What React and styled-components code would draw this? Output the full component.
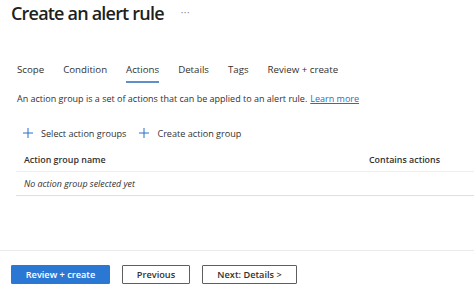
import React from "react";
import styled, { createGlobalStyle } from "styled-components";

const GlobalStyle = createGlobalStyle`
  html, body {
    margin: 0;
    padding: 0;
    background: #ffffff;
  }
  body {
    font-family: "Open Sans", "Noto Sans", Arial, sans-serif;
    color: #323130;
    width: 474px;
    height: 289px;
    overflow: hidden;
  }
`;

const Page = styled.div`
  display: flex;
  flex-direction: column;
  height: 289px;
`;

const Header = styled.div`
  display: flex;
  align-items: center;
  gap: 17px;
  padding: 0 0 0 11px;
  height: 26px;
`;

const Title = styled.h1`
  margin: 0;
  font-size: 18px;
  font-weight: 600;
  letter-spacing: -0.8px;
  color: #201f1e;
`;

const More = styled.span`
  font-size: 10px;
  color: #8a8886;
  letter-spacing: 0.5px;
  margin-top: -2px;
`;

const Tabs = styled.div`
  display: flex;
  gap: 19px;
  padding-left: 17px;
  margin-top: 34px;
  height: 22px;
`;

const Tab = styled.div`
  position: relative;
  font-size: 9.7px;
  line-height: 20px;
  color: #323130;
  &::after {
    content: "";
    position: absolute;
    left: 0;
    right: 0;
    bottom: -1px;
    height: 2px;
    background: ${(p) => (p.$active ? "#5f8fc8" : "transparent")};
  }
`;

const Description = styled.p`
  margin: 10px 0 0 17px;
  font-size: 9px;
  line-height: 14px;
  color: #323130;
`;

const Link = styled.a`
  color: #2a6ec2;
  text-decoration: underline;
  margin-left: 3px;
`;

const Toolbar = styled.div`
  display: flex;
  align-items: center;
  gap: 13px;
  padding-left: 23px;
  margin-top: 20px;
  height: 14px;
`;

const ToolButton = styled.div`
  display: flex;
  align-items: center;
  gap: 8px;
  font-size: 9.1px;
  color: #323130;
`;

const Table = styled.div`
  margin: 8px 0 0 16px;
`;

const Row = styled.div`
  display: grid;
  grid-template-columns: 345px 1fr;
  align-items: center;
  height: 23px;
  padding-left: 8px;
  border-bottom: 1px solid ${(p) => (p.$head ? "#f0efee" : "#e1dfdd")};
  font-size: 8.9px;
  font-weight: ${(p) => (p.$head ? 600 : 400)};
  font-style: ${(p) => (p.$italic ? "italic" : "normal")};
`;

const Spacer = styled.div`
  flex: 1;
`;

const Footer = styled.div`
  border-top: 1px solid #edebe9;
  display: flex;
  gap: 12px;
  padding: 14px 0 5px 11px;
`;

const Button = styled.button`
  height: 19px;
  width: ${(p) => p.$w}px;
  box-sizing: border-box;
  font-family: inherit;
  font-size: 9.2px;
  font-weight: 600;
  border-radius: 1px;
  padding: 0;
  border: 1px solid ${(p) => (p.$primary ? "#2b78d4" : "#605e5c")};
  background: ${(p) => (p.$primary ? "#2b78d4" : "#ffffff")};
  color: ${(p) => (p.$primary ? "#ffffff" : "#323130")};
`;

const Plus = () => (
  <svg width="10" height="10" viewBox="0 0 10 10">
    <path d="M5 0v10M0 5h10" stroke="#2b6fc7" strokeWidth="1" fill="none" />
  </svg>
);

export default function App() {
  return (
    <Page>
      <GlobalStyle />
      <Header>
        <Title>Create an alert rule</Title>
        <More>···</More>
      </Header>
      <Tabs>
        <Tab>Scope</Tab>
        <Tab>Condition</Tab>
        <Tab $active>Actions</Tab>
        <Tab>Details</Tab>
        <Tab>Tags</Tab>
        <Tab>Review + create</Tab>
      </Tabs>
      <Description>
        An action group is a set of actions that can be applied to an alert rule.
        <Link>Learn more</Link>
      </Description>
      <Toolbar>
        <ToolButton>
          <Plus />
          Select action groups
        </ToolButton>
        <ToolButton>
          <Plus />
          Create action group
        </ToolButton>
      </Toolbar>
      <Table>
        <Row $head>
          <span>Action group name</span>
          <span>Contains actions</span>
        </Row>
        <Row $italic>
          <span>No action group selected yet</span>
          <span />
        </Row>
      </Table>
      <Spacer />
      <Footer>
        <Button $primary $w={99}>Review + create</Button>
        <Button $w={68}>Previous</Button>
        <Button $w={95}>Next: Details &gt;</Button>
      </Footer>
    </Page>
  );
}
